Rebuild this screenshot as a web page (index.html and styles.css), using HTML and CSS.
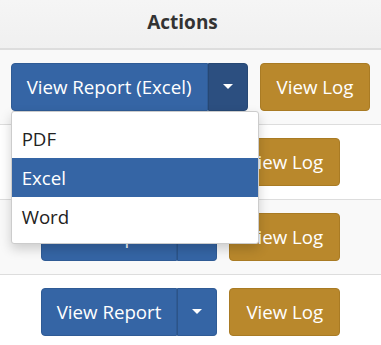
FILE: index.html
```html
<!DOCTYPE html>
<html lang="en">
<head>
  <meta charset="UTF-8">
  <title>Actions</title>
  <link rel="stylesheet" href="styles.css">
</head>
<body>
  <table class="jobs-table">
    <thead>
      <tr><th>Actions</th></tr>
    </thead>
    <tbody>
      <tr>
        <td>
          <div class="actions">
            <div class="split-btn open">
              <button class="btn btn-primary">View Report (Excel)</button>
              <button class="btn btn-primary toggle"><span class="caret"></span></button>
              <ul class="dropdown-menu">
                <li>PDF</li>
                <li class="active">Excel</li>
                <li>Word</li>
              </ul>
            </div>
            <button class="btn btn-log">View Log</button>
          </div>
        </td>
      </tr>
      <tr>
        <td>
          <div class="actions">
            <div class="split-btn">
              <button class="btn btn-primary">View Report</button>
              <button class="btn btn-primary toggle"><span class="caret"></span></button>
            </div>
            <button class="btn btn-log">View Log</button>
          </div>
        </td>
      </tr>
      <tr>
        <td>
          <div class="actions">
            <div class="split-btn">
              <button class="btn btn-primary">View Report</button>
              <button class="btn btn-primary toggle"><span class="caret"></span></button>
            </div>
            <button class="btn btn-log">View Log</button>
          </div>
        </td>
      </tr>
      <tr>
        <td>
          <div class="actions">
            <div class="split-btn">
              <button class="btn btn-primary">View Report</button>
              <button class="btn btn-primary toggle"><span class="caret"></span></button>
            </div>
            <button class="btn btn-log">View Log</button>
          </div>
        </td>
      </tr>
    </tbody>
  </table>
</body>
</html>
```

FILE: styles.css
```css
* {
  margin: 0;
  padding: 0;
  box-sizing: border-box;
}

body {
  font-family: 'Open Sans', sans-serif;
  color: #333;
  background: #fff;
}

.jobs-table {
  width: 100%;
  border-collapse: collapse;
}

.jobs-table th {
  height: 49px;
  font-size: 19px;
  font-weight: 700;
  text-align: center;
  vertical-align: middle;
  padding: 0 16px 4px 0;
  background: linear-gradient(#f5f5f5, #f0f0f0);
  border-bottom: 2px solid #ddd;
}

.jobs-table td {
  height: 75px;
  padding: 0;
  border-bottom: 1px solid #ddd;
  vertical-align: middle;
}

.jobs-table tbody tr:nth-child(odd) td {
  background: #f9f9f9;
}

.actions {
  display: flex;
  justify-content: center;
  align-items: center;
  gap: 12px;
}

.split-btn {
  position: relative;
  display: flex;
}

.btn {
  font-family: 'Open Sans', sans-serif;
  font-size: 18.7px;
  line-height: 24px;
  padding: 11px 15px;
  border: 1px solid transparent;
  border-radius: 4px;
  color: #fff;
  cursor: pointer;
}

.btn-primary {
  background: #3565a5;
  border-color: #2f5b95;
}

.split-btn .btn-primary:first-child {
  border-top-right-radius: 0;
  border-bottom-right-radius: 0;
}

.split-btn .toggle {
  border-top-left-radius: 0;
  border-bottom-left-radius: 0;
  border-left-color: #2c5489;
  padding: 11px 14px;
  display: flex;
  align-items: center;
}

.split-btn.open .toggle {
  background: #2c4f80;
  border-color: #274874;
}

.caret {
  display: block;
  width: 0;
  height: 0;
  border-left: 5px solid transparent;
  border-right: 5px solid transparent;
  border-top: 5px solid #fff;
}

.btn-log {
  padding: 11px 16px;
  background: #b9882c;
  border-color: #a97b24;
}

.dropdown-menu {
  position: absolute;
  top: 100%;
  left: 0;
  width: 248px;
  list-style: none;
  background: #fff;
  border: 1px solid #ccc;
  border-radius: 3px;
  padding: 7px 0;
  box-shadow: 0 5px 12px rgba(0, 0, 0, 0.18);
  z-index: 10;
}

.dropdown-menu li {
  font-size: 18.7px;
  line-height: 23px;
  padding: 8px 10px;
  color: #222;
}

.dropdown-menu li.active {
  background: #3565a5;
  color: #fff;
}
```
